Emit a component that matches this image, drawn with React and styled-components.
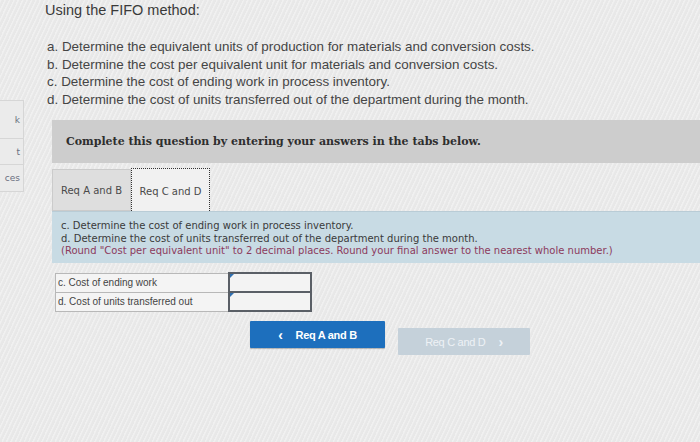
import React from "react";
import styled, { createGlobalStyle } from "styled-components";

const Global = createGlobalStyle`
  html, body { margin: 0; padding: 0; }
  body {
    background: #e8e8e8;
    font-family: "Liberation Sans", Arial, sans-serif;
    overflow: hidden;
  }
`;

const Page = styled.div`
  display: flex;
  width: 700px;
  height: 442px;
  overflow: hidden;
  background-color: #e8e8e8;
  background-image: repeating-linear-gradient(
    115deg,
    rgba(255, 255, 255, 0.35) 0px,
    rgba(255, 255, 255, 0.35) 1px,
    rgba(255, 255, 255, 0) 2px,
    rgba(255, 255, 255, 0) 4px
  );
`;

const Sidebar = styled.nav`
  width: 24px;
  flex: none;
  display: flex;
  flex-direction: column;
  padding-top: 100px;
`;

const SideItem = styled.div`
  height: ${(p) => p.$h}px;
  display: flex;
  align-items: center;
  justify-content: flex-end;
  white-space: nowrap;
  padding-right: 3px;
  border: 1px solid #d6d6d6;
  border-left: none;
  border-top: ${(p) => (p.$first ? "1px solid #d6d6d6" : "none")};
  background: #ebebeb;
  font-family: "DejaVu Sans", Verdana, sans-serif;
  font-size: 9px;
  color: #6a7080;
`;

const Main = styled.main`
  flex: 1;
  min-width: 0;
  padding-left: 21px;
  display: flex;
  flex-direction: column;
`;

const Title = styled.h1`
  margin: 2px 0 0 0;
  font-size: 14.5px;
  line-height: 17px;
  font-weight: normal;
  color: #3a3a3a;
`;

const List = styled.ol`
  list-style: none;
  margin: 19px 0 0 2px;
  padding: 0;
  font-size: 13.4px;
  line-height: 17.5px;
  color: #454545;
`;

const Card = styled.section`
  margin: 12px 0 0 7px;
  display: flex;
  flex-direction: column;
`;

const Banner = styled.div`
  height: 43px;
  display: flex;
  align-items: center;
  padding-left: 14px;
  background: #cdcdcd;
  font-family: "DejaVu Serif", Cambria, serif;
  font-weight: bold;
  font-size: 11px;
  color: #2e2e2e;
`;

const TabRow = styled.div`
  margin-top: 5px;
  display: flex;
  align-items: flex-end;
  height: 43px;
`;

const Tab = styled.button`
  height: ${(p) => (p.$active ? 43 : 42)}px;
  width: ${(p) => p.$w}px;
  padding: 0;
  display: flex;
  align-items: center;
  justify-content: center;
  font-family: "DejaVu Sans", Verdana, sans-serif;
  font-size: 10px;
  color: #4a4a4a;
  background: ${(p) => (p.$active ? "#f1f1f1" : "#dedede")};
  border: ${(p) => (p.$active ? "1px dotted #333" : "1px solid #cbcbcb")};
  border-bottom: ${(p) => (p.$active ? "none" : "1px solid #cbcbcb")};
  padding-top: ${(p) => (p.$active ? 3 : 0)}px;
`;

const Panel = styled.div`
  height: 52px;
  box-sizing: border-box;
  padding: 8px 0 0 9px;
  background: #c8dbe4;
  border-top: 1px solid #b9ccd6;
  font-family: "DejaVu Sans", Verdana, sans-serif;
  font-size: 10px;
  line-height: 12.5px;
  color: #3a3a3a;
  white-space: nowrap;
`;

const Note = styled.div`
  color: ${(p) => p.$color || "inherit"};
`;

const AnswerTable = styled.table`
  margin: 9px 0 0 3px;
  width: 252px;
  table-layout: fixed;
  border-collapse: collapse;
  font-size: 10px;
  color: #444;
`;

const LabelCell = styled.td`
  width: 170px;
  height: 18px;
  padding: 0 0 0 2px;
  border: 1px solid #b8b8b8;
  background: #f4f4f4;
  white-space: nowrap;
`;

const InputCell = styled.td`
  width: 80px;
  padding: 0;
  border: 2px solid #5a5f66;
  background: #f3f3f3;
  position: relative;
`;

const Marker = styled.span`
  position: absolute;
  left: 0;
  top: 0;
  width: 0;
  height: 0;
  border-top: 4px solid #2f6fb0;
  border-right: 4px solid transparent;
`;

const ButtonRow = styled.div`
  margin: 9px 0 0 198px;
  display: flex;
  align-items: flex-start;
  gap: 13px;
`;

const NavButton = styled.button`
  width: ${(p) => p.$w}px;
  height: 27px;
  margin-top: ${(p) => p.$offset || 0}px;
  display: flex;
  align-items: center;
  justify-content: center;
  gap: 13px;
  border: none;
  border-radius: 1px;
  font-family: "Liberation Sans", Arial, sans-serif;
  font-size: 11px;
  letter-spacing: -0.3px;
  color: ${(p) => (p.$disabled ? "#eef2f6" : "#ffffff")};
  background: ${(p) => (p.$disabled ? "#c5d1da" : "#1d6fbd")};
  box-shadow: ${(p) => (p.$disabled ? "none" : "0 1px 1px rgba(0,0,0,0.25)")};
  font-weight: ${(p) => (p.$disabled ? "normal" : "bold")};
`;

const Chevron = styled.span`
  font-size: 14px;
  font-weight: bold;
`;

export default function App() {
  return (
    <>
      <Global />
      <Page>
        <Sidebar>
          <SideItem $h={37} $first>k</SideItem>
          <SideItem $h={25}>t</SideItem>
          <SideItem $h={26}>ces</SideItem>
        </Sidebar>
        <Main>
          <Title>Using the FIFO method:</Title>
          <List>
            <li>a. Determine the equivalent units of production for materials and conversion costs.</li>
            <li>b. Determine the cost per equivalent unit for materials and conversion costs.</li>
            <li>c. Determine the cost of ending work in process inventory.</li>
            <li>d. Determine the cost of units transferred out of the department during the month.</li>
          </List>
          <Card>
            <Banner>Complete this question by entering your answers in the tabs below.</Banner>
            <TabRow>
              <Tab $w={79}>Req A and B</Tab>
              <Tab $w={79} $active>Req C and D</Tab>
            </TabRow>
            <Panel>
              <Note>c. Determine the cost of ending work in process inventory.</Note>
              <Note>d. Determine the cost of units transferred out of the department during the month.</Note>
              <Note $color="#8c3a5c">
                (Round "Cost per equivalent unit" to 2 decimal places. Round your final answer to the nearest whole number.)
              </Note>
            </Panel>
            <AnswerTable>
              <tbody>
                <tr>
                  <LabelCell>c. Cost of ending work</LabelCell>
                  <InputCell><Marker /></InputCell>
                </tr>
                <tr>
                  <LabelCell>d. Cost of units transferred out</LabelCell>
                  <InputCell><Marker /></InputCell>
                </tr>
              </tbody>
            </AnswerTable>
            <ButtonRow>
              <NavButton $w={135}>
                <Chevron>‹</Chevron>
                <span>Req A and B</span>
              </NavButton>
              <NavButton $w={132} $disabled $offset={7}>
                <span>Req C and D</span>
                <Chevron>›</Chevron>
              </NavButton>
            </ButtonRow>
          </Card>
        </Main>
      </Page>
    </>
  );
}
